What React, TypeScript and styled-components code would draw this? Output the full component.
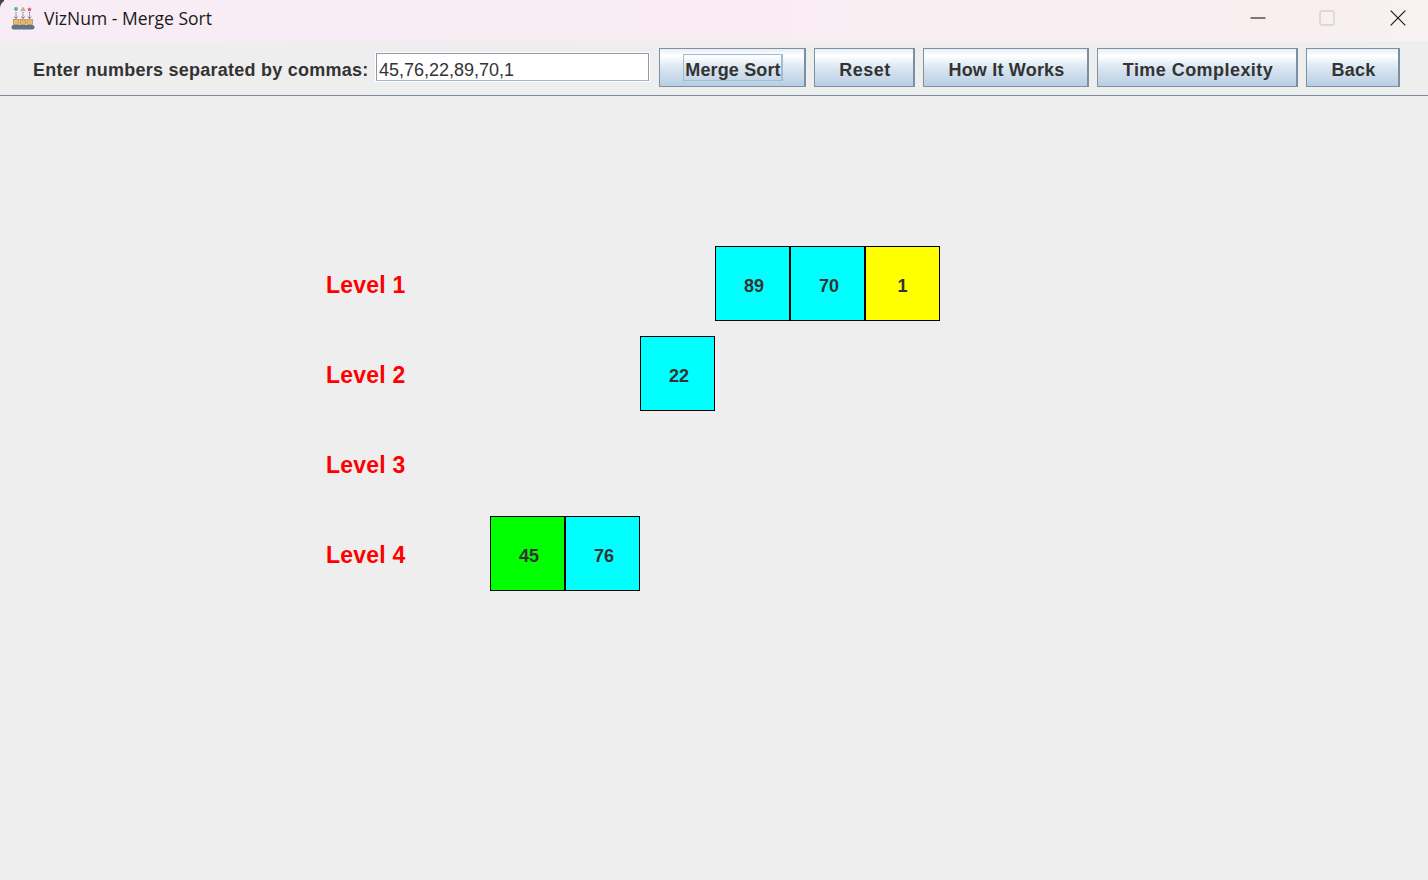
import React from "react";
import styled, { createGlobalStyle } from "styled-components";

const Global = createGlobalStyle`
  html, body { margin: 0; padding: 0; height: 100%; background: #eeeeee; }
  #root { height: 100%; }
  * { box-sizing: border-box; }
`;

const Window = styled.div`
  width: 1428px;
  height: 880px;
  display: flex;
  flex-direction: column;
  background: #eeeeee;
  overflow: hidden;
  position: relative;
  font-family: "Liberation Sans", Arial, sans-serif;

  &::before {
    content: "";
    position: absolute;
    top: 0;
    left: 0;
    width: 4px;
    height: 8px;
    background: radial-gradient(circle at 8px 8px, transparent 7.5px, #4a4448 8.2px);
  }
`;

const TitleBar = styled.div`
  height: 41px;
  flex: none;
  display: flex;
  align-items: center;
  padding-left: 11px;
  background: linear-gradient(90deg, #f8ecf6 0%, #f9edf3 50%, #f9f0f1 100%);
`;

const TitleText = styled.span`
  margin-left: 9px;
  font-family: "Open Sans", "Noto Sans", sans-serif;
  font-size: 17.5px;
  color: #1a1a1a;
  position: relative;
  top: -3px;
`;

const AppIcon = styled.svg`
  width: 24px;
  height: 24px;
  flex: none;
  position: relative;
  top: -3px;
`;

const WindowControls = styled.div`
  margin-left: auto;
  margin-right: -6px;
  display: flex;
  align-items: center;
  height: 100%;
  position: relative;
  top: -3px;
`;

const ControlSlot = styled.div<{ $w: number }>`
  width: ${(p) => p.$w}px;
  height: 36px;
  display: flex;
  align-items: center;
  justify-content: center;
`;

const Toolbar = styled.div`
  height: 55px;
  flex: none;
  display: flex;
  align-items: flex-start;
  padding: 7px 0 0 33px;
  border-bottom: 1px solid #7b8a9b;
  background: #eeeeee;
`;

const PromptLabel = styled.label`
  height: 39px;
  display: flex;
  align-items: center;
  padding-top: 6px;
  font-size: 18px;
  font-weight: 700;
  letter-spacing: 0.25px;
  color: #333333;
  white-space: nowrap;
  width: 343px;
`;

const NumberInput = styled.input`
  width: 273px;
  height: 28px;
  margin: 5px 10px 0 0;
  padding: 7px 2px 0;
  border: 1px solid #8a9bae;
  border-bottom-color: #a9b6c4;
  outline: 1px solid #ffffff;
  outline-offset: 0;
  background: #ffffff;
  font-family: "Liberation Sans", Arial, sans-serif;
  font-size: 18px;
  color: #333333;
`;

const ToolButton = styled.button<{ $w: number; $track?: number }>`
  width: ${(p) => p.$w}px;
  height: 39px;
  margin-right: 8px;
  padding: 6px 0 0 2px;
  display: flex;
  align-items: center;
  justify-content: center;
  border: 1px solid #7d90a6;
  border-right: 2px solid #7b8ea3;
  background: linear-gradient(180deg, #e6eef5 0%, #ffffff 18%, #dde8f2 48%, #b7cde2 100%);
  font-family: "Liberation Sans", Arial, sans-serif;
  font-size: 18px;
  font-weight: 700;
  letter-spacing: ${(p) => p.$track ?? 0.25}px;
  color: #333333;
`;

const FocusRing = styled.span`
  display: flex;
  align-items: center;
  justify-content: center;
  height: 27px;
  margin-top: -6px;
  padding: 6px 0 0 1px;
  border: 1px solid #a3bbd3;
  border-right-width: 2px;
`;

const Canvas = styled.main`
  flex: 1;
  padding: 150px 0 0 326px;
  display: flex;
  flex-direction: column;
  gap: 15px;
  background: #eeeeee;
`;

const LevelRow = styled.div`
  display: grid;
  grid-template-columns: 164px repeat(6, 75px);
  grid-template-rows: 75px;
`;

const LevelLabel = styled.div`
  grid-column: 1;
  grid-row: 1;
  align-self: center;
  padding-top: 4px;
  font-size: 23px;
  font-weight: 700;
  letter-spacing: 0.2px;
  color: #ff0000;
`;

const Cell = styled.div<{ $slot: number; $fill: string; $single: boolean }>`
  grid-column: ${(p) => p.$slot + 2};
  grid-row: 1;
  display: flex;
  align-items: center;
  justify-content: center;
  padding: 6px 0 0 ${(p) => (p.$single ? 0 : 3)}px;
  border: 1px solid #000000;
  background: ${(p) => p.$fill};
  font-size: 18px;
  font-weight: 700;
  color: #333333;
`;

const CYAN = "#00ffff";
const GREEN = "#00ff00";
const YELLOW = "#ffff00";

const levels: { name: string; cells: { slot: number; value: string; fill: string }[] }[] = [
  {
    name: "Level 1",
    cells: [
      { slot: 3, value: "89", fill: CYAN },
      { slot: 4, value: "70", fill: CYAN },
      { slot: 5, value: "1", fill: YELLOW },
    ],
  },
  { name: "Level 2", cells: [{ slot: 2, value: "22", fill: CYAN }] },
  { name: "Level 3", cells: [] },
  {
    name: "Level 4",
    cells: [
      { slot: 0, value: "45", fill: GREEN },
      { slot: 1, value: "76", fill: CYAN },
    ],
  },
];

const Logo = () => (
  <AppIcon viewBox="0 0 24 24">
    <circle cx="5" cy="3" r="1.900" fill="#4fb3a0" />
    <path d="M12 1.400 14 4.600H10Z" fill="#f2c14e" stroke="#555" strokeWidth="0.4" />
    <path d="m18.500 1 .7 1.500 1.600.2-1.100 1.100.3 1.600-1.500-.8-1.500.8.3-1.600-1.100-1.100 1.600-.2Z" fill="#c9505a" />
    <path d="M5 6v6M12 6v6M18.500 6v6" stroke="#666" strokeWidth="0.9" strokeDasharray="1.500 0.800" />
    <path d="M3.500 10.500 5 12.500l1.500-2M10.500 10.500l1.500 2 1.500-2M17 10.500l1.500 2 1.500-2" fill="none" stroke="#555" strokeWidth="0.8" />
    <rect x="2.500" y="13.500" width="5.500" height="5" fill="#f3b65c" stroke="#8a6a3a" strokeWidth="0.5" />
    <rect x="9.200" y="13.500" width="5.500" height="5" fill="#f3b65c" stroke="#8a6a3a" strokeWidth="0.5" />
    <rect x="15.900" y="13.500" width="5.500" height="5" fill="#f3b65c" stroke="#8a6a3a" strokeWidth="0.5" />
    <rect x="0.500" y="19" width="23" height="4.500" rx="2.200" fill="#5f7488" />
  </AppIcon>
);

export default function App() {
  return (
    <Window>
      <Global />
      <TitleBar>
        <Logo />
        <TitleText>VizNum - Merge Sort</TitleText>
        <WindowControls>
          <ControlSlot $w={68}>
            <svg width="16" height="16" viewBox="0 0 16 16">
              <path d="M.5 8h15" stroke="#1a1a1a" strokeWidth="1.100" />
            </svg>
          </ControlSlot>
          <ControlSlot $w={70}>
            <svg width="16" height="16" viewBox="0 0 16 16">
              <rect x="1" y="1" width="14" height="14" rx="2" fill="none" stroke="#d2d0d2" strokeWidth="1.300" />
            </svg>
          </ControlSlot>
          <ControlSlot $w={72}>
            <svg width="16" height="16" viewBox="0 0 16 16">
              <path d="m.7.7 14.600 14.600M15.300.7.700 15.300" stroke="#1a1a1a" strokeWidth="1.200" />
            </svg>
          </ControlSlot>
        </WindowControls>
      </TitleBar>
      <Toolbar>
        <PromptLabel htmlFor="nums">Enter numbers separated by commas:</PromptLabel>
        <NumberInput id="nums" defaultValue="45,76,22,89,70,1" />
        <ToolButton $w={147} $track={0.15}>
          <FocusRing>Merge Sort</FocusRing>
        </ToolButton>
        <ToolButton $w={101} $track={0.45}>Reset</ToolButton>
        <ToolButton $w={166} $track={0.2}>How It Works</ToolButton>
        <ToolButton $w={201} $track={0.45}>Time Complexity</ToolButton>
        <ToolButton $w={94}>Back</ToolButton>
      </Toolbar>
      <Canvas>
        {levels.map((level) => (
          <LevelRow key={level.name}>
            <LevelLabel>{level.name}</LevelLabel>
            {level.cells.map((c) => (
              <Cell key={c.slot} $slot={c.slot} $fill={c.fill} $single={c.value.length === 1}>
                {c.value}
              </Cell>
            ))}
          </LevelRow>
        ))}
      </Canvas>
    </Window>
  );
}
